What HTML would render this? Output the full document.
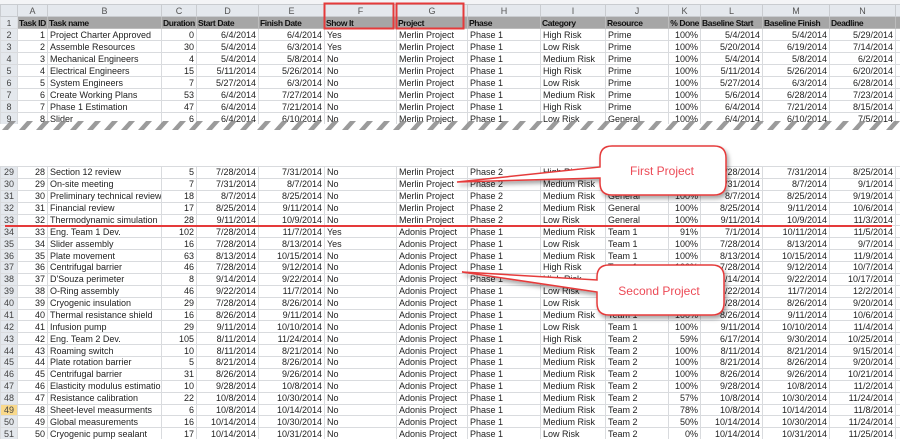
<!DOCTYPE html>
<html><head><meta charset="utf-8"><style>
html,body{margin:0;padding:0;width:900px;height:439px;overflow:hidden;background:#fff;position:relative}
table{border-collapse:collapse;table-layout:fixed;font:9px "Liberation Sans",sans-serif;color:#222;position:absolute;left:0;width:900px}
td{border:1px solid #d9dbde;padding:0 2px;white-space:nowrap;overflow:hidden;line-height:10px}
td.h{background:#e4e8ed;color:#444;text-align:center;padding:0}
td.r{text-align:right}
tr.hd td{background:#a6a6a6;font-weight:bold;color:#111;border-color:#bcbcbc;font-size:8.5px;letter-spacing:-0.4px;padding:0 1px}
tr.hd td.h{background:#e4e8ed;font-weight:normal;color:#444;border-color:#d9dbde;letter-spacing:0}
tr.cl td{background:#e4e8ed;color:#555;text-align:center;border-color:#c9ccd0}
#top{top:4px}
#top tr{height:12px}
#bot{top:166px}
#bot tr{height:11.88px}
.wrapT{position:absolute;left:0;top:0;width:900px;height:124px;overflow:hidden}
</style></head><body>
<div style="position:absolute;left:0;top:0;width:900px;height:4px;background:#f3f4f6;border-bottom:1px solid #c5c8cc"></div>
<div class="wrapT">
<table id="top">
<colgroup><col style="width:17px"><col style="width:30px"><col style="width:114px"><col style="width:35px"><col style="width:62px"><col style="width:66px"><col style="width:72px"><col style="width:71px"><col style="width:73px"><col style="width:65px"><col style="width:63px"><col style="width:32px"><col style="width:62px"><col style="width:67px"><col style="width:66px"><col style="width:5px"></colgroup>
<tr class="cl"><td></td><td>A</td><td>B</td><td>C</td><td>D</td><td>E</td><td>F</td><td>G</td><td>H</td><td>I</td><td>J</td><td>K</td><td>L</td><td>M</td><td>N</td><td></td></tr>
<tr class="hd"><td class="h">1</td><td>Task ID</td><td>Task name</td><td>Duration</td><td>Start Date</td><td>Finish Date</td><td>Show It</td><td>Project</td><td>Phase</td><td>Category</td><td>Resource</td><td class="r">% Done</td><td>Baseline Start</td><td>Baseline Finish</td><td>Deadline</td><td></td></tr>
<tr><td class="h">2</td><td class="r">1</td><td>Project Charter Approved</td><td class="r">0</td><td class="r">6/4/2014</td><td class="r">6/4/2014</td><td>Yes</td><td>Merlin Project</td><td>Phase 1</td><td>High Risk</td><td>Prime</td><td class="r">100%</td><td class="r">5/4/2014</td><td class="r">5/4/2014</td><td class="r">5/29/2014</td><td></td></tr>
<tr><td class="h">3</td><td class="r">2</td><td>Assemble Resources</td><td class="r">30</td><td class="r">5/4/2014</td><td class="r">6/3/2014</td><td>Yes</td><td>Merlin Project</td><td>Phase 1</td><td>Low Risk</td><td>Prime</td><td class="r">100%</td><td class="r">5/20/2014</td><td class="r">6/19/2014</td><td class="r">7/14/2014</td><td></td></tr>
<tr><td class="h">4</td><td class="r">3</td><td>Mechanical Engineers</td><td class="r">4</td><td class="r">5/4/2014</td><td class="r">5/8/2014</td><td>No</td><td>Merlin Project</td><td>Phase 1</td><td>Medium Risk</td><td>Prime</td><td class="r">100%</td><td class="r">5/4/2014</td><td class="r">5/8/2014</td><td class="r">6/2/2014</td><td></td></tr>
<tr><td class="h">5</td><td class="r">4</td><td>Electrical Engineers</td><td class="r">15</td><td class="r">5/11/2014</td><td class="r">5/26/2014</td><td>No</td><td>Merlin Project</td><td>Phase 1</td><td>High Risk</td><td>Prime</td><td class="r">100%</td><td class="r">5/11/2014</td><td class="r">5/26/2014</td><td class="r">6/20/2014</td><td></td></tr>
<tr><td class="h">6</td><td class="r">5</td><td>System Engineers</td><td class="r">7</td><td class="r">5/27/2014</td><td class="r">6/3/2014</td><td>No</td><td>Merlin Project</td><td>Phase 1</td><td>Low Risk</td><td>Prime</td><td class="r">100%</td><td class="r">5/27/2014</td><td class="r">6/3/2014</td><td class="r">6/28/2014</td><td></td></tr>
<tr><td class="h">7</td><td class="r">6</td><td>Create Working Plans</td><td class="r">53</td><td class="r">6/4/2014</td><td class="r">7/27/2014</td><td>No</td><td>Merlin Project</td><td>Phase 1</td><td>Medium Risk</td><td>Prime</td><td class="r">100%</td><td class="r">5/6/2014</td><td class="r">6/28/2014</td><td class="r">7/23/2014</td><td></td></tr>
<tr><td class="h">8</td><td class="r">7</td><td>Phase 1 Estimation</td><td class="r">47</td><td class="r">6/4/2014</td><td class="r">7/21/2014</td><td>No</td><td>Merlin Project</td><td>Phase 1</td><td>High Risk</td><td>Prime</td><td class="r">100%</td><td class="r">6/4/2014</td><td class="r">7/21/2014</td><td class="r">8/15/2014</td><td></td></tr>
<tr><td class="h">9</td><td class="r">8</td><td>Slider</td><td class="r">6</td><td class="r">6/4/2014</td><td class="r">6/10/2014</td><td>No</td><td>Merlin Project</td><td>Phase 1</td><td>Low Risk</td><td>General</td><td class="r">100%</td><td class="r">6/4/2014</td><td class="r">6/10/2014</td><td class="r">7/5/2014</td><td></td></tr>
<tr><td class="h">10</td><td></td><td></td><td></td><td></td><td></td><td></td><td></td><td></td><td></td><td></td><td></td><td></td><td></td><td></td><td></td></tr>
</table>
</div>
<svg style="position:absolute;left:0;top:112px" width="900" height="22">
<g fill="#8a8a8a" opacity="0.85">
<polygon points="2,18 10,9 16,9 8,18"/><polygon points="19,18 27,9 33,9 25,18"/><polygon points="36,18 44,9 50,9 42,18"/><polygon points="53,18 61,9 67,9 59,18"/><polygon points="70,18 78,9 84,9 76,18"/><polygon points="87,18 95,9 101,9 93,18"/><polygon points="104,18 112,9 118,9 110,18"/><polygon points="121,18 129,9 135,9 127,18"/><polygon points="138,18 146,9 152,9 144,18"/><polygon points="155,18 163,9 169,9 161,18"/><polygon points="172,18 180,9 186,9 178,18"/><polygon points="189,18 197,9 203,9 195,18"/><polygon points="206,18 214,9 220,9 212,18"/><polygon points="223,18 231,9 237,9 229,18"/><polygon points="240,18 248,9 254,9 246,18"/><polygon points="257,18 265,9 271,9 263,18"/><polygon points="274,18 282,9 288,9 280,18"/><polygon points="291,18 299,9 305,9 297,18"/><polygon points="308,18 316,9 322,9 314,18"/><polygon points="325,18 333,9 339,9 331,18"/><polygon points="342,18 350,9 356,9 348,18"/><polygon points="359,18 367,9 373,9 365,18"/><polygon points="376,18 384,9 390,9 382,18"/><polygon points="393,18 401,9 407,9 399,18"/><polygon points="410,18 418,9 424,9 416,18"/><polygon points="427,18 435,9 441,9 433,18"/><polygon points="444,18 452,9 458,9 450,18"/><polygon points="461,18 469,9 475,9 467,18"/><polygon points="478,18 486,9 492,9 484,18"/><polygon points="495,18 503,9 509,9 501,18"/><polygon points="512,18 520,9 526,9 518,18"/><polygon points="529,18 537,9 543,9 535,18"/><polygon points="546,18 554,9 560,9 552,18"/><polygon points="563,18 571,9 577,9 569,18"/><polygon points="580,18 588,9 594,9 586,18"/><polygon points="597,18 605,9 611,9 603,18"/><polygon points="614,18 622,9 628,9 620,18"/><polygon points="631,18 639,9 645,9 637,18"/><polygon points="648,18 656,9 662,9 654,18"/><polygon points="665,18 673,9 679,9 671,18"/><polygon points="682,18 690,9 696,9 688,18"/><polygon points="699,18 707,9 713,9 705,18"/><polygon points="716,18 724,9 730,9 722,18"/><polygon points="733,18 741,9 747,9 739,18"/><polygon points="750,18 758,9 764,9 756,18"/><polygon points="767,18 775,9 781,9 773,18"/><polygon points="784,18 792,9 798,9 790,18"/><polygon points="801,18 809,9 815,9 807,18"/><polygon points="818,18 826,9 832,9 824,18"/><polygon points="835,18 843,9 849,9 841,18"/><polygon points="852,18 860,9 866,9 858,18"/><polygon points="869,18 877,9 883,9 875,18"/><polygon points="886,18 894,9 900,9 892,18"/>
</g></svg>
<table id="bot">
<colgroup><col style="width:17px"><col style="width:30px"><col style="width:114px"><col style="width:35px"><col style="width:62px"><col style="width:66px"><col style="width:72px"><col style="width:71px"><col style="width:73px"><col style="width:65px"><col style="width:63px"><col style="width:32px"><col style="width:62px"><col style="width:67px"><col style="width:66px"><col style="width:5px"></colgroup>
<tr><td class="h">29</td><td class="r">28</td><td>Section 12 review</td><td class="r">5</td><td class="r">7/28/2014</td><td class="r">7/31/2014</td><td>No</td><td>Merlin Project</td><td>Phase 2</td><td>High Risk</td><td>General</td><td class="r">100%</td><td class="r">7/28/2014</td><td class="r">7/31/2014</td><td class="r">8/25/2014</td><td></td></tr>
<tr><td class="h">30</td><td class="r">29</td><td>On-site meeting</td><td class="r">7</td><td class="r">7/31/2014</td><td class="r">8/7/2014</td><td>No</td><td>Merlin Project</td><td>Phase 2</td><td>Medium Risk</td><td>General</td><td class="r">100%</td><td class="r">7/31/2014</td><td class="r">8/7/2014</td><td class="r">9/1/2014</td><td></td></tr>
<tr><td class="h">31</td><td class="r">30</td><td>Preliminary technical review</td><td class="r">18</td><td class="r">8/7/2014</td><td class="r">8/25/2014</td><td>No</td><td>Merlin Project</td><td>Phase 2</td><td>Medium Risk</td><td>General</td><td class="r">100%</td><td class="r">8/7/2014</td><td class="r">8/25/2014</td><td class="r">9/19/2014</td><td></td></tr>
<tr><td class="h">32</td><td class="r">31</td><td>Financial review</td><td class="r">17</td><td class="r">8/25/2014</td><td class="r">9/11/2014</td><td>No</td><td>Merlin Project</td><td>Phase 2</td><td>Medium Risk</td><td>General</td><td class="r">100%</td><td class="r">8/25/2014</td><td class="r">9/11/2014</td><td class="r">10/6/2014</td><td></td></tr>
<tr><td class="h">33</td><td class="r">32</td><td>Thermodynamic simulation</td><td class="r">28</td><td class="r">9/11/2014</td><td class="r">10/9/2014</td><td>No</td><td>Merlin Project</td><td>Phase 2</td><td>Low Risk</td><td>General</td><td class="r">100%</td><td class="r">9/11/2014</td><td class="r">10/9/2014</td><td class="r">11/3/2014</td><td></td></tr>
<tr><td class="h">34</td><td class="r">33</td><td>Eng. Team 1 Dev.</td><td class="r">102</td><td class="r">7/28/2014</td><td class="r">11/7/2014</td><td>Yes</td><td>Adonis Project</td><td>Phase 1</td><td>Medium Risk</td><td>Team 1</td><td class="r">91%</td><td class="r">7/1/2014</td><td class="r">10/11/2014</td><td class="r">11/5/2014</td><td></td></tr>
<tr><td class="h">35</td><td class="r">34</td><td>Slider assembly</td><td class="r">16</td><td class="r">7/28/2014</td><td class="r">8/13/2014</td><td>Yes</td><td>Adonis Project</td><td>Phase 1</td><td>Low Risk</td><td>Team 1</td><td class="r">100%</td><td class="r">7/28/2014</td><td class="r">8/13/2014</td><td class="r">9/7/2014</td><td></td></tr>
<tr><td class="h">36</td><td class="r">35</td><td>Plate movement</td><td class="r">63</td><td class="r">8/13/2014</td><td class="r">10/15/2014</td><td>No</td><td>Adonis Project</td><td>Phase 1</td><td>Medium Risk</td><td>Team 1</td><td class="r">100%</td><td class="r">8/13/2014</td><td class="r">10/15/2014</td><td class="r">11/9/2014</td><td></td></tr>
<tr><td class="h">37</td><td class="r">36</td><td>Centrifugal barrier</td><td class="r">46</td><td class="r">7/28/2014</td><td class="r">9/12/2014</td><td>No</td><td>Adonis Project</td><td>Phase 1</td><td>High Risk</td><td>Team 1</td><td class="r">100%</td><td class="r">7/28/2014</td><td class="r">9/12/2014</td><td class="r">10/7/2014</td><td></td></tr>
<tr><td class="h">38</td><td class="r">37</td><td>D'Souza perimeter</td><td class="r">8</td><td class="r">9/14/2014</td><td class="r">9/22/2014</td><td>No</td><td>Adonis Project</td><td>Phase 1</td><td>High Risk</td><td>Team 1</td><td class="r">100%</td><td class="r">9/14/2014</td><td class="r">9/22/2014</td><td class="r">10/17/2014</td><td></td></tr>
<tr><td class="h">39</td><td class="r">38</td><td>O-Ring assembly</td><td class="r">46</td><td class="r">9/22/2014</td><td class="r">11/7/2014</td><td>No</td><td>Adonis Project</td><td>Phase 1</td><td>Low Risk</td><td>Team 1</td><td class="r">100%</td><td class="r">9/22/2014</td><td class="r">11/7/2014</td><td class="r">12/2/2014</td><td></td></tr>
<tr><td class="h">40</td><td class="r">39</td><td>Cryogenic insulation</td><td class="r">29</td><td class="r">7/28/2014</td><td class="r">8/26/2014</td><td>No</td><td>Adonis Project</td><td>Phase 1</td><td>Low Risk</td><td>Team 1</td><td class="r">100%</td><td class="r">7/28/2014</td><td class="r">8/26/2014</td><td class="r">9/20/2014</td><td></td></tr>
<tr><td class="h">41</td><td class="r">40</td><td>Thermal resistance shield</td><td class="r">16</td><td class="r">8/26/2014</td><td class="r">9/11/2014</td><td>No</td><td>Adonis Project</td><td>Phase 1</td><td>Medium Risk</td><td>Team 1</td><td class="r">100%</td><td class="r">8/26/2014</td><td class="r">9/11/2014</td><td class="r">10/6/2014</td><td></td></tr>
<tr><td class="h">42</td><td class="r">41</td><td>Infusion pump</td><td class="r">29</td><td class="r">9/11/2014</td><td class="r">10/10/2014</td><td>No</td><td>Adonis Project</td><td>Phase 1</td><td>Low Risk</td><td>Team 1</td><td class="r">100%</td><td class="r">9/11/2014</td><td class="r">10/10/2014</td><td class="r">11/4/2014</td><td></td></tr>
<tr><td class="h">43</td><td class="r">42</td><td>Eng. Team 2 Dev.</td><td class="r">105</td><td class="r">8/11/2014</td><td class="r">11/24/2014</td><td>No</td><td>Adonis Project</td><td>Phase 1</td><td>High Risk</td><td>Team 2</td><td class="r">59%</td><td class="r">6/17/2014</td><td class="r">9/30/2014</td><td class="r">10/25/2014</td><td></td></tr>
<tr><td class="h">44</td><td class="r">43</td><td>Roaming switch</td><td class="r">10</td><td class="r">8/11/2014</td><td class="r">8/21/2014</td><td>No</td><td>Adonis Project</td><td>Phase 1</td><td>Medium Risk</td><td>Team 2</td><td class="r">100%</td><td class="r">8/11/2014</td><td class="r">8/21/2014</td><td class="r">9/15/2014</td><td></td></tr>
<tr><td class="h">45</td><td class="r">44</td><td>Plate rotation barrier</td><td class="r">5</td><td class="r">8/21/2014</td><td class="r">8/26/2014</td><td>No</td><td>Adonis Project</td><td>Phase 1</td><td>Medium Risk</td><td>Team 2</td><td class="r">100%</td><td class="r">8/21/2014</td><td class="r">8/26/2014</td><td class="r">9/20/2014</td><td></td></tr>
<tr><td class="h">46</td><td class="r">45</td><td>Centrifugal barrier</td><td class="r">31</td><td class="r">8/26/2014</td><td class="r">9/26/2014</td><td>No</td><td>Adonis Project</td><td>Phase 1</td><td>Medium Risk</td><td>Team 2</td><td class="r">100%</td><td class="r">8/26/2014</td><td class="r">9/26/2014</td><td class="r">10/21/2014</td><td></td></tr>
<tr><td class="h">47</td><td class="r">46</td><td>Elasticity modulus estimation</td><td class="r">10</td><td class="r">9/28/2014</td><td class="r">10/8/2014</td><td>No</td><td>Adonis Project</td><td>Phase 1</td><td>Medium Risk</td><td>Team 2</td><td class="r">100%</td><td class="r">9/28/2014</td><td class="r">10/8/2014</td><td class="r">11/2/2014</td><td></td></tr>
<tr><td class="h">48</td><td class="r">47</td><td>Resistance calibration</td><td class="r">22</td><td class="r">10/8/2014</td><td class="r">10/30/2014</td><td>No</td><td>Adonis Project</td><td>Phase 1</td><td>Medium Risk</td><td>Team 2</td><td class="r">57%</td><td class="r">10/8/2014</td><td class="r">10/30/2014</td><td class="r">11/24/2014</td><td></td></tr>
<tr><td class="h" style="background:#f9d98b">49</td><td class="r">48</td><td>Sheet-level measurments</td><td class="r">6</td><td class="r">10/8/2014</td><td class="r">10/14/2014</td><td>No</td><td>Adonis Project</td><td>Phase 1</td><td>Medium Risk</td><td>Team 2</td><td class="r">78%</td><td class="r">10/8/2014</td><td class="r">10/14/2014</td><td class="r">11/8/2014</td><td></td></tr>
<tr><td class="h">50</td><td class="r">49</td><td>Global measurements</td><td class="r">16</td><td class="r">10/14/2014</td><td class="r">10/30/2014</td><td>No</td><td>Adonis Project</td><td>Phase 1</td><td>Medium Risk</td><td>Team 2</td><td class="r">50%</td><td class="r">10/14/2014</td><td class="r">10/30/2014</td><td class="r">11/24/2014</td><td></td></tr>
<tr><td class="h">51</td><td class="r">50</td><td>Cryogenic pump sealant</td><td class="r">17</td><td class="r">10/14/2014</td><td class="r">10/31/2014</td><td>No</td><td>Adonis Project</td><td>Phase 1</td><td>Low Risk</td><td>Team 2</td><td class="r">0%</td><td class="r">10/14/2014</td><td class="r">10/31/2014</td><td class="r">11/25/2014</td><td></td></tr>
</table>
<svg style="position:absolute;left:0;top:0" width="900" height="439">
<defs><filter id="sh" x="-20%" y="-20%" width="150%" height="160%"><feDropShadow dx="2" dy="3" stdDeviation="2" flood-color="#000" flood-opacity="0.35"/></filter></defs>
<rect x="324.5" y="3.5" width="69" height="25" fill="none" stroke="#e53a3a" stroke-width="2"/>
<rect x="396.5" y="3.5" width="67" height="25" fill="none" stroke="#e53a3a" stroke-width="2"/>
<line x1="5" y1="226" x2="892" y2="226" stroke="#e53a3a" stroke-width="2"/>
<g filter="url(#sh)">
<path d="M612,146 H714 Q726,146 726,158 V183 Q726,195 714,195 H612 Q600,195 600,183 V178 L457,182 L600,167 V158 Q600,146 612,146 Z" fill="#fff" stroke="#e53a3a" stroke-width="1.5"/>
<path d="M609,265 H712 Q724,265 724,277 V303 Q724,315 712,315 H609 Q597,315 597,303 V292 L462,272 L597,280 V277 Q597,265 609,265 Z" fill="#fff" stroke="#e53a3a" stroke-width="1.5"/>
</g>
<text x="662" y="175" text-anchor="middle" font-family="Liberation Sans, sans-serif" font-size="12" fill="#ec4a56">First Project</text>
<text x="659" y="295" text-anchor="middle" font-family="Liberation Sans, sans-serif" font-size="12" fill="#ec4a56">Second Project</text>
</svg>
</body></html>
